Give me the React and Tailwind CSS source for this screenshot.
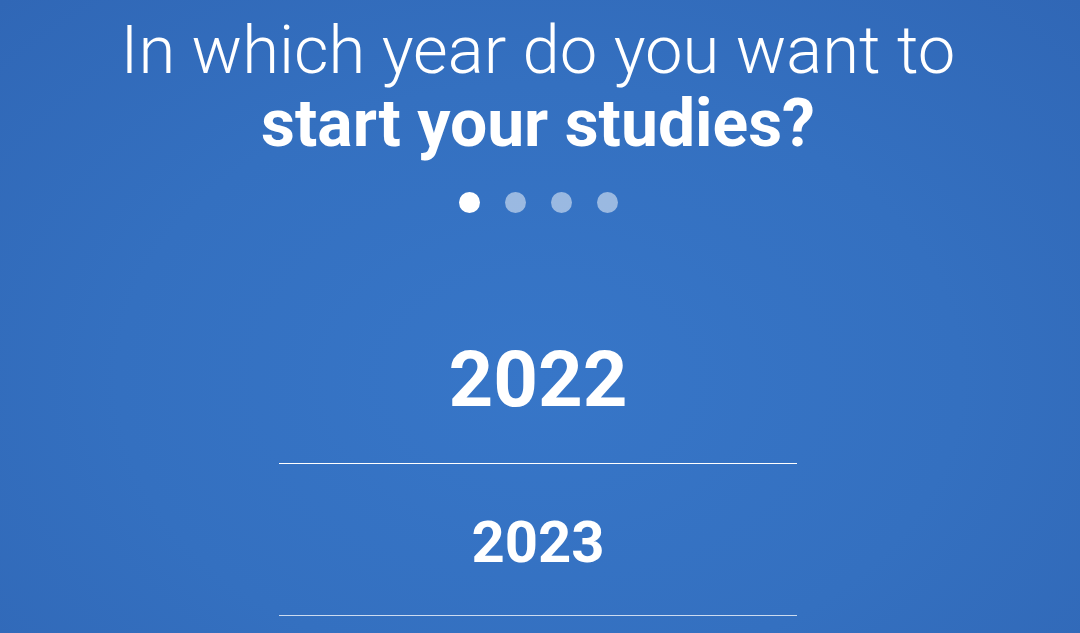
import React, { useState } from "react";

const years = [
  { year: "2022", size: "text-[78px] leading-[78px] pt-[50px]" },
  { year: "2023", size: "text-[58px] leading-[58px] pt-[49px]" },
];

const App = () => {
  const [step] = useState(0);

  return (
    <div
      className="w-screen h-[633px] overflow-hidden bg-[radial-gradient(ellipse_at_50%_60%,#3776c8_0%,#3470c0_55%,#3067b6_100%)] text-white"
      style={{ fontFamily: "Roboto, 'Noto Sans', sans-serif" }}
    >
      <div className="flex flex-col items-center pr-1 pt-[14px]">
        {/* Question */}
        <h1 className="text-center text-[67px] leading-[73px] font-light">
          In which year do you want to
          <br />
          <span className="font-bold text-[66px]">start your studies?</span>
        </h1>

        {/* Step dots */}
        <div className="flex gap-[25px] mt-[32px]">
          {[0, 1, 2, 3].map((i) => (
            <span
              key={i}
              className={
                i === step
                  ? "w-[21px] h-[21px] rounded-full bg-white"
                  : "w-[21px] h-[21px] rounded-full bg-white/50"
              }
            />
          ))}
        </div>

        {/* Year list */}
        <div className="w-[518px] mt-[78px]">
          {years.map((y, i) => (
            <button
              key={y.year}
              className={
                i === 0
                  ? "block w-full text-center font-bold pb-[44px] border-b border-white"
                  : "block w-full text-center font-bold pb-[44px] border-b border-white/75"
              }
            >
              <span className={`block ${y.size}`}>{y.year}</span>
            </button>
          ))}
        </div>
      </div>
    </div>
  );
};

export default App;
